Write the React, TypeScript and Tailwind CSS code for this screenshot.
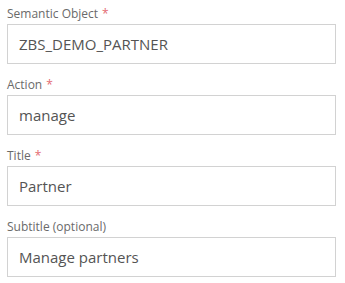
import React from 'react';

interface FieldProps {
  label: string;
  value: string;
  required?: boolean;
}

const Field: React.FC<FieldProps> = ({ label, value, required }) => (
  <div className="mb-[7px]">
    <div className="h-6 pt-[6px] text-[12px] leading-4 text-[#6a6a6a]">
      {label}
      {required && <span className="ml-1 text-[#e36a72]">*</span>}
    </div>
    <div className="flex h-10 items-center border border-[#d2d2d2] bg-white px-[11px] text-[15px] text-[#545454]">
      {value}
    </div>
  </div>
);

export default function App() {
  return (
    <div
      className="min-h-screen bg-white px-[7px] pr-[9px]"
      style={{ fontFamily: '"Open Sans", "Noto Sans", sans-serif' }}
    >
      <Field label="Semantic Object" value="ZBS_DEMO_PARTNER" required />
      <Field label="Action" value="manage" required />
      <Field label="Title" value="Partner" required />
      <Field label="Subtitle (optional)" value="Manage partners" />
    </div>
  );
}
